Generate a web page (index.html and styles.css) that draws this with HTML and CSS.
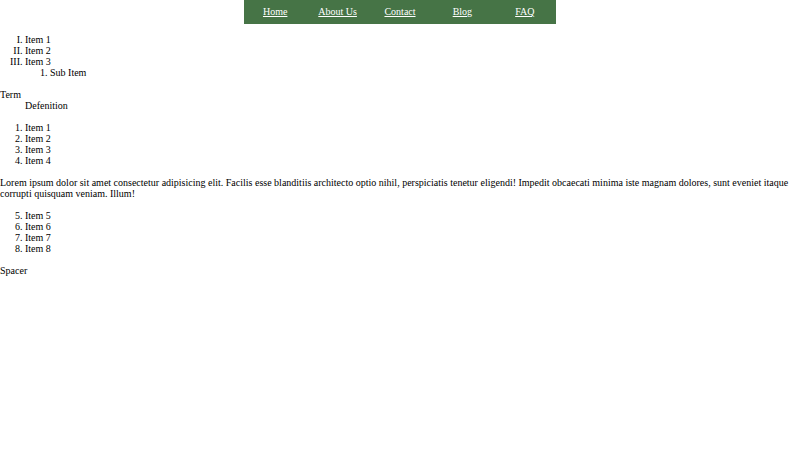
FILE: index.html
```
<!DOCTYPE html>
<html lang="en">
<head>
<meta charset="utf-8">
<title>Lists</title>
<link rel="stylesheet" href="styles.css">
</head>
<body>
<nav>
  <ul class="menu">
    <li><a href="#home">Home</a></li>
    <li><a href="#about">About Us</a></li>
    <li><a href="#contact">Contact</a></li>
    <li><a href="#blog">Blog</a></li>
    <li><a href="#faq">FAQ</a></li>
  </ul>
</nav>
<ol class="list roman">
  <li>Item 1</li>
  <li>Item 2</li>
  <li>Item 3
    <ol class="sublist">
      <li>Sub Item</li>
    </ol>
  </li>
</ol>
<dl class="terms">
  <dt>Term</dt>
  <dd>Defenition</dd>
</dl>
<ol class="list">
  <li>Item 1</li>
  <li>Item 2</li>
  <li>Item 3</li>
  <li>Item 4</li>
</ol>
<p class="text">Lorem ipsum dolor sit amet consectetur adipisicing elit. Facilis esse blanditiis architecto optio nihil, perspiciatis tenetur eligendi! Impedit obcaecati minima iste magnam dolores, sunt eveniet itaque corrupti quisquam veniam. Illum!</p>
<ol class="list" start="5">
  <li>Item 5</li>
  <li>Item 6</li>
  <li>Item 7</li>
  <li>Item 8</li>
</ol>
<div>Spacer</div>
</body>
</html>
```
FILE: styles.css
```
body {
  margin: 0;
  font-family: "Liberation Serif", "Times New Roman", serif;
  font-size: 10px;
  line-height: 11px;
}

.menu {
  display: grid;
  grid-template-columns: repeat(5, 1fr);
  max-width: 312px;
  margin: 0 auto 10px;
  padding: 0;
  background: #467446;
  list-style: none;
}

.menu a {
  display: block;
  padding: 6px 0 7px;
  color: #fff;
  text-align: center;
}

.list {
  margin: 0 0 11px;
  padding-left: 25px;
}

.roman {
  list-style-type: upper-roman;
}

.sublist {
  margin: 0;
  padding-left: 25px;
}

.terms {
  margin: 0 0 11px;
}

.terms dd {
  margin-left: 25px;
}

.text {
  margin: 0 0 11px;
}
```
